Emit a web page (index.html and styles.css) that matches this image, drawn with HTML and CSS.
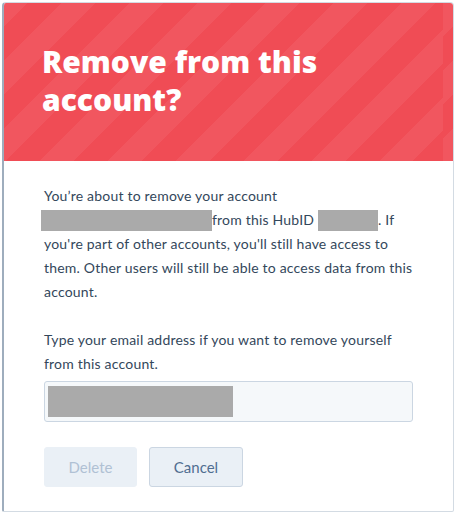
FILE: index.html
```html
<!DOCTYPE html>
<html>
<head>
<meta charset="utf-8">
<link rel="stylesheet" href="styles.css">
</head>
<body>
<div class="dialog">
  <div class="header">
    <h2 class="title">Remove from this account?</h2>
  </div>
  <div class="body">
    <p class="text">You’re about to remove your account <span class="redact redact-long"></span>from this HubID <span class="redact redact-short"></span>. If you're part of other accounts, you'll still have access to them. Other users will still be able to access data from this account.</p>
    <p class="text label">Type your email address if you want to remove yourself from this account.</p>
    <div class="input"><span class="redact-value"></span></div>
    <div class="actions">
      <button class="btn btn-disabled" disabled>Delete</button>
      <button class="btn btn-secondary">Cancel</button>
    </div>
  </div>
</div>
</body>
</html>
```

FILE: styles.css
```css
html, body {
  margin: 0;
  padding: 0;
  background: #ffffff;
}
body {
  font-family: Lato, "Open Sans", sans-serif;
  color: #33475b;
}
.dialog {
  margin: 2px;
  width: 452px;
  height: 510px;
  box-sizing: border-box;
  border: 1px solid #d3dbe3;
  border-left: 2px solid #9eadbd;
  border-radius: 4px 4px 2px 2px;
  overflow: hidden;
  display: flex;
  flex-direction: column;
}
.header {
  height: 158px;
  box-sizing: border-box;
  padding: 40px 40px 0 38px;
  background: repeating-linear-gradient(135deg, #f1565f 0 24px, #f04c55 24px 48px);
  background-position: -10px 0;
}
.title {
  margin: 0;
  color: #ffffff;
  font-family: "Open Sans", sans-serif;
  font-weight: 800;
  font-size: 30px;
  line-height: 38px;
  width: 340px;
}
.body {
  padding: 23px 40px 24px 40px;
}
.text {
  margin: 0 0 24px 0;
  font-size: 14px;
  line-height: 24px;
  letter-spacing: 0.2px;
}
.label {
  margin-bottom: 5px;
}
.redact {
  display: inline-block;
  height: 21px;
  background: #aaaaaa;
  vertical-align: -6px;
}
.redact-long {
  width: 171px;
  margin-left: -3px;
}
.redact-short {
  width: 60px;
}
.input {
  height: 41px;
  box-sizing: border-box;
  background: #f5f8fa;
  border: 1px solid #cbd6e2;
  border-radius: 3px;
  padding: 4px 3px;
}
.redact-value {
  display: block;
  width: 185px;
  height: 31px;
  background: #aaaaaa;
}
.actions {
  display: flex;
  gap: 12px;
  margin-top: 25px;
}
.btn {
  height: 40px;
  box-sizing: border-box;
  border-radius: 3px;
  font-family: Lato, sans-serif;
  font-size: 15px;
  padding: 0;
  background: #eaf0f6;
}
.btn-disabled {
  width: 93px;
  border: 1px solid #eaf0f6;
  color: #b0c1d4;
}
.btn-secondary {
  width: 94px;
  border: 1px solid #cbd6e2;
  color: #506e91;
}
```
